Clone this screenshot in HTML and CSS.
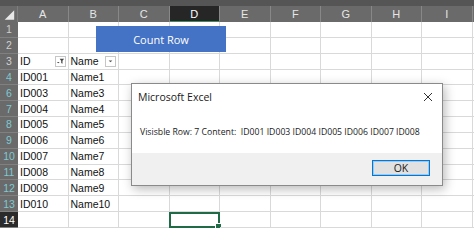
FILE: index.html
```html
<!DOCTYPE html>
<html>
<head>
<meta charset="utf-8">
<link rel="stylesheet" href="styles.css">
</head>
<body>
<div class="sheet">
  <div class="row head">
    <div class="corner"><svg width="18" height="16" viewBox="0 0 18 16"><polygon points="15,4 15,14 5,14" fill="#e8e8e8"/></svg></div>
    <div class="col">A</div><div class="col">B</div><div class="col">C</div><div class="col sel">D</div><div class="col">E</div><div class="col">F</div><div class="col">G</div><div class="col">H</div><div class="col">I</div><div class="col"></div>
  </div>
  <div class="row"><div class="rn">1</div><div class="c"></div><div class="c"></div><div class="c"></div><div class="c"></div><div class="c"></div><div class="c"></div><div class="c"></div><div class="c"></div><div class="c"></div><div class="c"></div></div>
  <div class="row"><div class="rn">2</div><div class="c"></div><div class="c"></div><div class="c"></div><div class="c"></div><div class="c"></div><div class="c"></div><div class="c"></div><div class="c"></div><div class="c"></div><div class="c"></div></div>
  <div class="row"><div class="rn">3</div>
    <div class="c hdr">ID<span class="fbtn"><svg width="10" height="10" viewBox="0 0 10 10"><polygon points="1,6 4,6 2.5,7.5" fill="#444"/><path d="M4 2.5h5l-1.8 2.2v3.3l-1.4-0.8v-2.5z" fill="#444"/></svg></span></div>
    <div class="c hdr">Name<span class="fbtn"><svg width="10" height="10" viewBox="0 0 10 10"><polygon points="3,4.5 7,4.5 5,6.5" fill="#555"/></svg></span></div>
    <div class="c"></div><div class="c"></div><div class="c"></div><div class="c"></div><div class="c"></div><div class="c"></div><div class="c"></div><div class="c"></div></div>
  <div class="row"><div class="rn f">4</div><div class="c">ID001</div><div class="c">Name1</div><div class="c"></div><div class="c"></div><div class="c"></div><div class="c"></div><div class="c"></div><div class="c"></div><div class="c"></div><div class="c"></div></div>
  <div class="row"><div class="rn f">6</div><div class="c">ID003</div><div class="c">Name3</div><div class="c"></div><div class="c"></div><div class="c"></div><div class="c"></div><div class="c"></div><div class="c"></div><div class="c"></div><div class="c"></div></div>
  <div class="row"><div class="rn f">7</div><div class="c">ID004</div><div class="c">Name4</div><div class="c"></div><div class="c"></div><div class="c"></div><div class="c"></div><div class="c"></div><div class="c"></div><div class="c"></div><div class="c"></div></div>
  <div class="row"><div class="rn f">8</div><div class="c">ID005</div><div class="c">Name5</div><div class="c"></div><div class="c"></div><div class="c"></div><div class="c"></div><div class="c"></div><div class="c"></div><div class="c"></div><div class="c"></div></div>
  <div class="row"><div class="rn f">9</div><div class="c">ID006</div><div class="c">Name6</div><div class="c"></div><div class="c"></div><div class="c"></div><div class="c"></div><div class="c"></div><div class="c"></div><div class="c"></div><div class="c"></div></div>
  <div class="row"><div class="rn f">10</div><div class="c">ID007</div><div class="c">Name7</div><div class="c"></div><div class="c"></div><div class="c"></div><div class="c"></div><div class="c"></div><div class="c"></div><div class="c"></div><div class="c"></div></div>
  <div class="row"><div class="rn f">11</div><div class="c">ID008</div><div class="c">Name8</div><div class="c"></div><div class="c"></div><div class="c"></div><div class="c"></div><div class="c"></div><div class="c"></div><div class="c"></div><div class="c"></div></div>
  <div class="row"><div class="rn f">12</div><div class="c">ID009</div><div class="c">Name9</div><div class="c"></div><div class="c"></div><div class="c"></div><div class="c"></div><div class="c"></div><div class="c"></div><div class="c"></div><div class="c"></div></div>
  <div class="row"><div class="rn f">13</div><div class="c">ID010</div><div class="c">Name10</div><div class="c"></div><div class="c"></div><div class="c"></div><div class="c"></div><div class="c"></div><div class="c"></div><div class="c"></div><div class="c"></div></div>
  <div class="row"><div class="rn cur">14</div><div class="c"></div><div class="c"></div><div class="c"></div><div class="c active"><span class="handle"></span></div><div class="c"></div><div class="c"></div><div class="c"></div><div class="c"></div><div class="c"></div><div class="c"></div></div>

  <div class="macro-btn">Count Row</div>

  <div class="dialog">
    <div class="dlg-title">
      <span>Microsoft Excel</span>
      <svg class="close" width="10" height="10" viewBox="0 0 10 10"><path d="M1 1L9 9M9 1L1 9" stroke="#333" stroke-width="1"/></svg>
    </div>
    <div class="dlg-body">Visisble Row: 7 Content:&nbsp; ID001 ID003 ID004 ID005 ID006 ID007 ID008</div>
    <div class="dlg-foot"><div class="ok">OK</div></div>
  </div>
</div>
</body>
</html>
```

FILE: styles.css
```css
html, body {
  margin: 0;
  padding: 0;
  background: #ffffff;
}
.sheet {
  position: relative;
  width: 474px;
  height: 228px;
  overflow: hidden;
  display: grid;
  grid-template-rows: 22px repeat(13, 1fr);
  font-family: "Liberation Sans", Arial, sans-serif;
}
.row {
  display: grid;
  grid-template-columns: 18px repeat(9, 50.5px) 1fr;
  min-height: 0;
}
.head {
  background: #555555;
  padding-top: 6px;
}
.corner {
  background: #6a6a6a;
  border-right: 1px solid #7d7d7d;
  box-sizing: border-box;
  display: flex;
  align-items: flex-end;
}
.corner svg {
  display: block;
}
.col {
  background: #6a6a6a;
  color: #e6e6e6;
  font-size: 11px;
  display: flex;
  align-items: center;
  justify-content: center;
  border-right: 1px solid #888888;
  box-sizing: border-box;
}
.col.sel {
  background: #262626;
  color: #ffffff;
  border-bottom: 1px solid #3f8a5f;
}
.rn {
  background: #6a6a6a;
  color: #cfcfcf;
  font-size: 10.5px;
  display: flex;
  align-items: center;
  justify-content: center;
  border-bottom: 1px solid #808080;
  box-sizing: border-box;
}
.rn.f {
  color: #7fc9d0;
}
.rn.cur {
  background: #2a2a2a;
  color: #ffffff;
}
.c {
  position: relative;
  border-right: 1px solid #d9d9d9;
  border-bottom: 1px solid #d9d9d9;
  box-sizing: border-box;
  font-size: 10.5px;
  color: #111111;
  display: flex;
  align-items: center;
  padding-left: 2px;
  white-space: nowrap;
}
.c.hdr {
  justify-content: space-between;
  padding-right: 2px;
}
.fbtn {
  width: 11px;
  height: 11px;
  border: 1px solid #c6c6c6;
  background: #ffffff;
  display: flex;
  align-items: center;
  justify-content: center;
  box-sizing: border-box;
}
.c.active {
  border: 2px solid #1e6b45;
  margin-left: -1px;
}
.handle {
  position: absolute;
  right: -4px;
  bottom: -4px;
  width: 5px;
  height: 5px;
  background: #1e6b45;
  border: 1px solid #ffffff;
}
.macro-btn {
  position: absolute;
  left: 96px;
  top: 26px;
  width: 130px;
  height: 26px;
  background: #4472c4;
  color: #ffffff;
  font-family: "Open Sans", sans-serif;
  font-size: 11px;
  display: flex;
  align-items: center;
  justify-content: center;
}
.dialog {
  position: absolute;
  left: 131px;
  top: 83px;
  width: 312px;
  height: 103px;
  box-sizing: border-box;
  border: 1px solid #8a8a8a;
  background: #ffffff;
  box-shadow: 2px 3px 10px rgba(0, 0, 0, 0.28);
  display: flex;
  flex-direction: column;
  font-family: "Open Sans", sans-serif;
  color: #1a1a1a;
}
.dlg-title {
  height: 26px;
  display: flex;
  align-items: center;
  justify-content: space-between;
  padding: 0 9px 0 6px;
  font-size: 10.5px;
}
.close {
  display: block;
}
.dlg-body {
  flex: 1;
  display: flex;
  align-items: center;
  padding-left: 8px;
  font-size: 8.7px;
  white-space: nowrap;
}
.dlg-foot {
  height: 32px;
  background: #f0f0f0;
  display: flex;
  justify-content: flex-end;
  align-items: flex-start;
  padding: 7px 12px 0 0;
  box-sizing: border-box;
}
.ok {
  width: 58px;
  height: 16px;
  box-sizing: border-box;
  border: 1px solid #0078d7;
  box-shadow: inset 0 0 0 1px #9cc8ee;
  background: #e1e1e1;
  font-size: 10.5px;
  display: flex;
  align-items: center;
  justify-content: center;
}
```
